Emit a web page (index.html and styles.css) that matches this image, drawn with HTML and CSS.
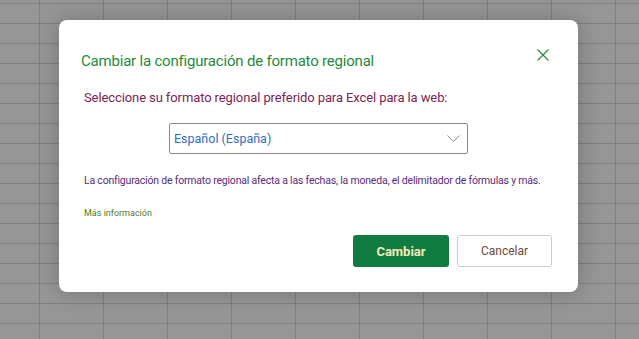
FILE: index.html
```html
<!DOCTYPE html>
<html lang="es">
<head>
<meta charset="utf-8">
<title>Cambiar la configuración de formato regional</title>
<link rel="stylesheet" href="styles.css">
</head>
<body>
<div class="sheet">
  <div class="dialog" role="dialog">
    <div class="header">
      <h1 class="title">Cambiar la configuración de formato regional</h1>
      <button class="close" aria-label="Cerrar">
        <svg width="12" height="12" viewBox="0 0 12 12"><path d="M0.5 0.5 L11.5 11.5 M11.5 0.5 L0.5 11.5" stroke="#1f8a3d" stroke-width="1.1" fill="none"/></svg>
      </button>
    </div>
    <p class="prompt">Seleccione su formato regional preferido para Excel para la web:</p>
    <div class="select">
      <span class="select-value">Español (España)</span>
      <svg class="chevron" width="13" height="7" viewBox="0 0 13 7"><path d="M0.5 0.5 L6.5 6.5 L12.5 0.5" stroke="#8a8a8a" stroke-width="1" fill="none"/></svg>
    </div>
    <p class="desc">La configuración de formato regional afecta a las fechas, la moneda, el delimitador de fórmulas y más.</p>
    <a class="more" href="#">Más información</a>
    <div class="actions">
      <button class="btn primary">Cambiar</button>
      <button class="btn secondary">Cancelar</button>
    </div>
  </div>
</div>
</body>
</html>
```
FILE: styles.css
```css
html, body {
  margin: 0;
  padding: 0;
}
body {
  width: 639px;
  height: 339px;
  overflow: hidden;
  font-family: Roboto, "Liberation Sans", sans-serif;
}
.sheet {
  width: 639px;
  height: 339px;
  background-color: #969696;
  background-image:
    linear-gradient(to right, #7f7f7f 1px, transparent 1px),
    linear-gradient(to bottom, #7f7f7f 1px, transparent 1px);
  background-size: 64px 20px;
  background-position: 39px 3px;
  padding: 20px 0 0 59px;
  box-sizing: border-box;
}
.dialog {
  width: 519px;
  height: 272px;
  background: #fff;
  border-radius: 8px;
  box-shadow: 0 0 24px rgba(0, 0, 0, 0.22);
  box-sizing: border-box;
  padding: 31px 29px 0 25px;
  display: flex;
  flex-direction: column;
}
.header {
  display: flex;
  justify-content: space-between;
  align-items: flex-start;
  margin-left: -3px;
}
.title {
  margin: 0;
  font-size: 15px;
  line-height: 20px;
  letter-spacing: -0.2px;
  font-weight: 400;
  color: #1f8a3d;
}
.close {
  border: 0;
  background: none;
  padding: 0;
  margin-top: -2px;
  width: 12px;
  height: 12px;
  display: flex;
}
.prompt {
  margin: 18px 0 0;
  font-size: 13px;
  line-height: 18px;
  letter-spacing: -0.1px;
  color: #7a2456;
}
.select {
  margin: 16px 0 0 85px;
  width: 299px;
  height: 31px;
  box-sizing: border-box;
  border: 1px solid #8a8a8a;
  border-radius: 2px;
  display: flex;
  align-items: center;
  justify-content: space-between;
  padding: 0 7px 0 4px;
}
.select-value {
  font-size: 12.5px;
  color: #2e6fc4;
}
.desc {
  margin: 20px 0 0;
  font-size: 10.5px;
  line-height: 14px;
  letter-spacing: -0.2px;
  white-space: nowrap;
  color: #5a2a7e;
}
.more {
  margin-top: 19px;
  font-size: 9px;
  line-height: 12px;
  color: #4f7a2a;
  text-decoration: none;
  align-self: flex-start;
}
.actions {
  display: flex;
  justify-content: flex-end;
  gap: 8px;
  margin-top: 16px;
  margin-right: -3px;
}
.btn {
  height: 32px;
  border-radius: 3px;
  font-family: Roboto, "Liberation Sans", sans-serif;
  cursor: pointer;
}
.primary {
  width: 96px;
  background: #107c41;
  border: 0;
  color: #f4ebb8;
  font-size: 13px;
  font-weight: 700;
}
.secondary {
  width: 95px;
  background: #fff;
  border: 1px solid #cccccc;
  color: #6b4a3a;
  font-size: 12px;
}
```
